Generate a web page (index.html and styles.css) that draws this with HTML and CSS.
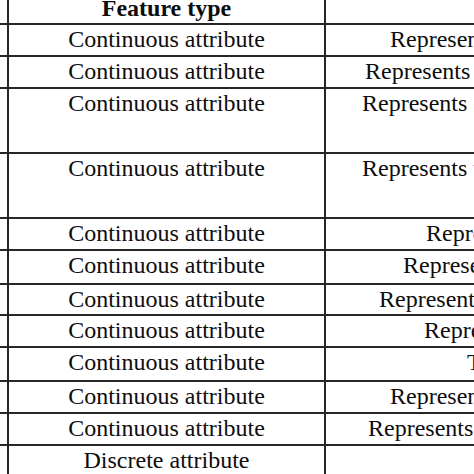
FILE: index.html
```html
<!DOCTYPE html>
<html>
<head>
<meta charset="utf-8">
<link rel="stylesheet" href="styles.css">
</head>
<body>
<div class="table">
  <div class="row head">
    <div class="c0"></div>
    <div class="c1 bold">Feature type</div>
    <div class="c2"></div>
  </div>
  <div class="row h32">
    <div class="c0"></div>
    <div class="c1">Continuous attribute</div>
    <div class="c2 i64">Represents the value</div>
  </div>
  <div class="row h32">
    <div class="c0"></div>
    <div class="c1">Continuous attribute</div>
    <div class="c2 i39">Represents the value</div>
  </div>
  <div class="row h65">
    <div class="c0"></div>
    <div class="c1">Continuous attribute</div>
    <div class="c2 i36">Represents&nbsp;&nbsp;&nbsp;&nbsp;&nbsp;</div>
  </div>
  <div class="row h65">
    <div class="c0"></div>
    <div class="c1">Continuous attribute</div>
    <div class="c2 i36">Represents the</div>
  </div>
  <div class="row h32">
    <div class="c0"></div>
    <div class="c1">Continuous attribute</div>
    <div class="c2 i100">Represents the value</div>
  </div>
  <div class="row h34">
    <div class="c0"></div>
    <div class="c1">Continuous attribute</div>
    <div class="c2 i77">Represents the value</div>
  </div>
  <div class="row h31">
    <div class="c0"></div>
    <div class="c1">Continuous attribute</div>
    <div class="c2 i53">Represents the value</div>
  </div>
  <div class="row h32">
    <div class="c0"></div>
    <div class="c1">Continuous attribute</div>
    <div class="c2 i98">Represents the value</div>
  </div>
  <div class="row h34">
    <div class="c0"></div>
    <div class="c1">Continuous attribute</div>
    <div class="c2 i141">The value of</div>
  </div>
  <div class="row h32">
    <div class="c0"></div>
    <div class="c1">Continuous attribute</div>
    <div class="c2 i64">Represents the value</div>
  </div>
  <div class="row h32">
    <div class="c0"></div>
    <div class="c1">Continuous attribute</div>
    <div class="c2 i42">Represents&nbsp;&nbsp;&nbsp;the value</div>
  </div>
  <div class="row last">
    <div class="c0"></div>
    <div class="c1">Discrete attribute</div>
    <div class="c2"></div>
  </div>
</div>
</body>
</html>
```
FILE: styles.css
```css
html, body {
  margin: 0;
  padding: 0;
  background: #ffffff;
  overflow: hidden;
}
body {
  width: 474px;
  height: 474px;
}
.table {
  font-family: "Liberation Serif", "Times New Roman", serif;
  font-size: 24px;
  line-height: 24px;
  color: #0d0d0d;
  width: 474px;
}
.row {
  display: flex;
  box-sizing: border-box;
  border-bottom: 2px solid #262626;
}
.row.head { height: 25px; }
.row.h31 { height: 31px; }
.row.h32 { height: 32px; }
.row.h34 { height: 34px; }
.row.h65 { height: 65px; }
.row.last { height: 40px; border-bottom: none; }
.c0 {
  width: 7px;
  flex: none;
  border-right: 2px solid #262626;
}
.c1 {
  width: 315px;
  flex: none;
  border-right: 2px solid #262626;
  text-align: center;
  padding-top: 2px;
  white-space: nowrap;
}
.c2 {
  flex: 1;
  min-width: 0;
  overflow: hidden;
  white-space: nowrap;
  padding-top: 2px;
}
.bold {
  font-weight: bold;
  line-height: 17px;
  padding-top: 0;
}
.i36 { text-indent: 36px; }
.i39 { text-indent: 39px; }
.i42 { text-indent: 42px; }
.i53 { text-indent: 53px; }
.i64 { text-indent: 64px; }
.i77 { text-indent: 77px; }
.i98 { text-indent: 98px; }
.i100 { text-indent: 100px; }
.i141 { text-indent: 141px; }
```
